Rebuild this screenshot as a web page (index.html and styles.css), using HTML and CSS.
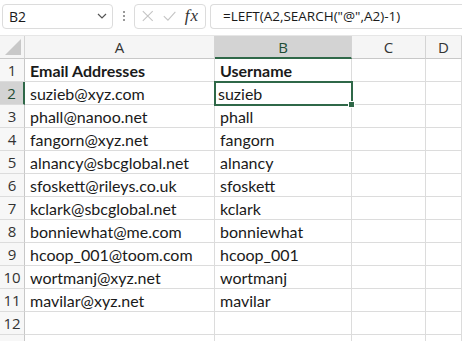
FILE: index.html
```html
<!DOCTYPE html>
<html>
  <head>
    <title>Username formula</title>
    <link rel="stylesheet" href="styles.css">
  </head>
  <body>
  <div class="formula-bar">
    <div class="name-box">
      <span>B2</span>
      <svg class="chevron" width="10" height="6" viewBox="0 0 10 6"><path d="M1 1 L5 5 L9 1" fill="none" stroke="#555" stroke-width="1.2"/></svg>
    </div>
    <div class="grip"><i></i><i></i><i></i></div>
    <div class="fx-buttons">
      <svg width="14" height="14" viewBox="0 0 14 14"><path d="M1 1 L13 13 M13 1 L1 13" stroke="#c4c4c4" stroke-width="1.3"/></svg>
      <svg width="16" height="13" viewBox="0 0 16 13"><path d="M1 6 L6 11 L15 1" fill="none" stroke="#c4c4c4" stroke-width="1.3"/></svg>
      <span class="fx">fx</span>
    </div>
    <div class="formula-input">=LEFT(A2,SEARCH("@",A2)-1)</div>
  </div>
  <div class="sheet">
    <div class="corner"><svg width="16" height="16" viewBox="0 0 16 16"><path d="M16 0 L16 16 L0 16 Z" fill="#c8c8c8"/></svg></div>
    <div class="col-head">A</div>
    <div class="col-head active">B</div>
    <div class="col-head">C</div>
    <div class="col-head">D</div>

    <div class="row-head">1</div><div class="cell bold">Email Addresses</div><div class="cell bold">Username</div><div class="cell"></div><div class="cell"></div>
    <div class="row-head active">2</div><div class="cell">suzieb@xyz.com</div><div class="cell selected">suzieb</div><div class="cell"></div><div class="cell"></div>
    <div class="row-head">3</div><div class="cell">phall@nanoo.net</div><div class="cell">phall</div><div class="cell"></div><div class="cell"></div>
    <div class="row-head">4</div><div class="cell">fangorn@xyz.net</div><div class="cell">fangorn</div><div class="cell"></div><div class="cell"></div>
    <div class="row-head">5</div><div class="cell">alnancy@sbcglobal.net</div><div class="cell">alnancy</div><div class="cell"></div><div class="cell"></div>
    <div class="row-head">6</div><div class="cell">sfoskett@rileys.co.uk</div><div class="cell">sfoskett</div><div class="cell"></div><div class="cell"></div>
    <div class="row-head">7</div><div class="cell">kclark@sbcglobal.net</div><div class="cell">kclark</div><div class="cell"></div><div class="cell"></div>
    <div class="row-head">8</div><div class="cell">bonniewhat@me.com</div><div class="cell">bonniewhat</div><div class="cell"></div><div class="cell"></div>
    <div class="row-head">9</div><div class="cell">hcoop_001@toom.com</div><div class="cell">hcoop_001</div><div class="cell"></div><div class="cell"></div>
    <div class="row-head">10</div><div class="cell">wortmanj@xyz.net</div><div class="cell">wortmanj</div><div class="cell"></div><div class="cell"></div>
    <div class="row-head">11</div><div class="cell">mavilar@xyz.net</div><div class="cell">mavilar</div><div class="cell"></div><div class="cell"></div>
    <div class="row-head">12</div><div class="cell"></div><div class="cell"></div><div class="cell"></div><div class="cell"></div>
    <div class="row-head"></div><div class="cell"></div><div class="cell"></div><div class="cell"></div><div class="cell"></div>
  </div>
</body>
</html>
```

FILE: styles.css
```css
body {
  margin: 0;
  width: 462px;
  height: 341px;
  overflow: hidden;
  background-color: #fff;
  font-family: Lato, "Liberation Sans", sans-serif;
  color: #1a1a1a;
}

.formula-bar {
  display: flex;
  align-items: center;
  height: 36px;
  padding: 0 0 3px 2px;
  box-sizing: border-box;
  background-color: #fff;
  border-bottom: 1px solid #e6e6e6;
}

.name-box {
  display: flex;
  align-items: center;
  justify-content: space-between;
  width: 111px;
  height: 25px;
  box-sizing: border-box;
  padding: 0 5px 0 6px;
  border: 1px solid #dcdcdc;
  border-radius: 4px;
  font-family: "Open Sans", sans-serif;
  font-size: 14px;
}

.grip {
  display: flex;
  flex-direction: column;
  gap: 2px;
  margin: 0 9px 0 10px;
}

.grip i {
  display: block;
  width: 2px;
  height: 2px;
  background-color: #9a9a9a;
}

.fx-buttons {
  display: flex;
  align-items: center;
  gap: 9px;
  width: 72px;
  height: 25px;
  box-sizing: border-box;
  padding: 0 6px 0 7px;
  border: 1px solid #dcdcdc;
  border-radius: 4px;
}

.fx {
  font-family: "Liberation Serif", serif;
  font-style: italic;
  font-size: 17px;
  color: #333;
  letter-spacing: 1px;
}

.formula-input {
  flex: 1;
  height: 25px;
  line-height: 23px;
  margin-left: 4px;
  padding-left: 12px;
  box-sizing: border-box;
  border: 1px solid #dcdcdc;
  border-right: none;
  border-radius: 4px 0 0 4px;
  font-family: "Open Sans", sans-serif;
  font-size: 13.5px;
  white-space: nowrap;
}

.sheet {
  display: grid;
  grid-template-columns: 25px 190px 137px 74px 1fr;
  grid-auto-rows: 23px;
  font-size: 16px;
}

.corner {
  display: flex;
  align-items: flex-end;
  justify-content: flex-end;
  padding: 0 3px 3px 0;
  background-color: #f5f5f5;
  border-right: 1px solid #d4d4d4;
  border-bottom: 1px solid #c8c8c8;
}

.col-head {
  display: flex;
  align-items: center;
  justify-content: center;
  background-color: #f5f5f5;
  border-right: 1px solid #d4d4d4;
  border-bottom: 1px solid #c8c8c8;
  font-family: "Open Sans", sans-serif;
  font-size: 15px;
  color: #333;
}

.col-head.active {
  background-color: #d3d3d3;
  border-bottom: 2px solid #2f6848;
  color: #1f4d35;
}

.row-head {
  display: flex;
  align-items: center;
  justify-content: center;
  background-color: #f7f7f7;
  border-right: 1px solid #c8c8c8;
  border-bottom: 1px solid #dcdcdc;
  font-family: "Open Sans", sans-serif;
  font-size: 15px;
  color: #333;
}

.row-head.active {
  background-color: #d3d3d3;
  border-right: 2px solid #2f6848;
  color: #1f4d35;
}

.cell {
  display: flex;
  align-items: center;
  padding-left: 5px;
  border-right: 1px solid #dcdcdc;
  border-bottom: 1px solid #dcdcdc;
  white-space: nowrap;
  overflow: hidden;
}

.bold {
  font-weight: bold;
}

.selected {
  position: relative;
  overflow: visible;
  padding-left: 3px;
  outline: 2px solid #2f6848;
  outline-offset: -1px;
}

.selected::after {
  content: "";
  position: absolute;
  right: -4px;
  bottom: -4px;
  width: 5px;
  height: 5px;
  background-color: #2f6848;
  border: 1px solid #fff;
}
```
